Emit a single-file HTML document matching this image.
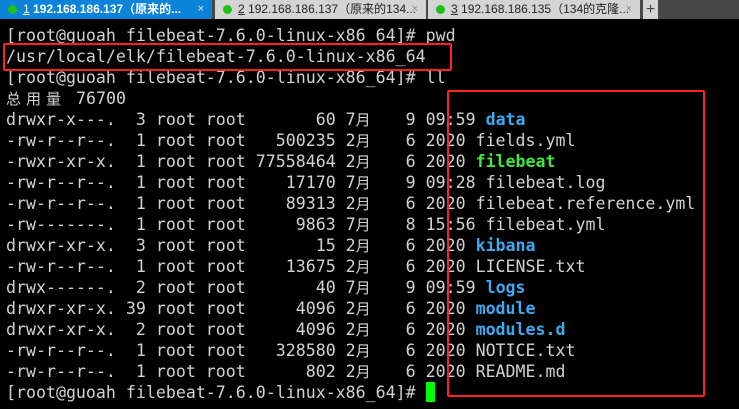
<!DOCTYPE html>
<html><head><meta charset="utf-8"><style>
*{margin:0;padding:0;box-sizing:border-box}
body{width:739px;height:409px;background:#000;overflow:hidden;position:relative;font-family:"DejaVu Sans Mono","Liberation Mono","Noto Sans CJK SC",monospace}
.bar{position:absolute;left:0;top:0;width:739px;height:19px;background:#474747}
.tab{position:absolute;top:0;height:19px;background:#d4d4d4;font-family:"Liberation Sans","Noto Sans CJK SC",sans-serif;font-size:12px;line-height:19px;color:#222;white-space:nowrap;overflow:hidden}
.tab .dot{position:absolute;left:8px;top:5px;width:9px;height:9px;border-radius:50%;background:#1cc21c}
.tab .t{position:absolute;left:23px;top:0}
.tab .x{position:absolute;right:8px;top:0;font-size:11px;color:#888}
.a{background:#0a83d8;color:#fff}
.a .x{color:#dfefff}
.term{position:absolute;left:6px;top:25px;font-size:16.6px;line-height:21px;color:#d2d2d2;white-space:pre}
.c{display:inline-block;width:20px;height:21px;line-height:21px;vertical-align:top;font-family:"Noto Sans CJK SC",sans-serif;font-size:15px}
.b{color:#3daaf0;font-weight:bold}
.g{color:#3ee63e;font-weight:bold}
.cur{display:inline-block;width:9px;height:20px;background:#00ff00;vertical-align:top}
.box{position:absolute;border:2.5px solid #f22;border-radius:2px}
</style></head><body>
<div class="bar"></div>
<div class="tab a" style="left:0;width:212px"><span class="dot"></span><span class="t"><u>1</u> <b>192.168.186.137（原来的...</b></span><span class="x">×</span></div>
<div class="tab" style="left:215px;width:211px"><span class="dot"></span><span class="t"><u>2</u> 192.168.186.137（原来的134...</span><span class="x">×</span></div>
<div class="tab" style="left:428px;width:212px"><span class="dot"></span><span class="t"><u>3</u> 192.168.186.135（134的克隆...</span><span class="x">×</span></div>
<div class="tab" style="left:643px;width:15px;font-size:16px;text-align:center;color:#444">+</div>
<div class="term">[root@guoah filebeat-7.6.0-linux-x86_64]# pwd
/usr/local/elk/filebeat-7.6.0-linux-x86_64
[root@guoah filebeat-7.6.0-linux-x86_64]# ll
<span class="c">总</span><span class="c">用</span><span class="c">量</span> 76700
drwxr-x---.  3 root root       60 7<span class="c">月</span>   9 09:59 <span class="b">data</span>
-rw-r--r--.  1 root root   500235 2<span class="c">月</span>   6 2020 fields.yml
-rwxr-xr-x.  1 root root 77558464 2<span class="c">月</span>   6 2020 <span class="g">filebeat</span>
-rw-r--r--.  1 root root    17170 7<span class="c">月</span>   9 09:28 filebeat.log
-rw-r--r--.  1 root root    89313 2<span class="c">月</span>   6 2020 filebeat.reference.yml
-rw-------.  1 root root     9863 7<span class="c">月</span>   8 15:56 filebeat.yml
drwxr-xr-x.  3 root root       15 2<span class="c">月</span>   6 2020 <span class="b">kibana</span>
-rw-r--r--.  1 root root    13675 2<span class="c">月</span>   6 2020 LICENSE.txt
drwx------.  2 root root       40 7<span class="c">月</span>   9 09:59 <span class="b">logs</span>
drwxr-xr-x. 39 root root     4096 2<span class="c">月</span>   6 2020 <span class="b">module</span>
drwxr-xr-x.  2 root root     4096 2<span class="c">月</span>   6 2020 <span class="b">modules.d</span>
-rw-r--r--.  1 root root   328580 2<span class="c">月</span>   6 2020 NOTICE.txt
-rw-r--r--.  1 root root      802 2<span class="c">月</span>   6 2020 README.md
[root@guoah filebeat-7.6.0-linux-x86_64]# <span class="cur"></span></div>
<div class="box" style="left:3px;top:43px;width:449px;height:28px"></div>
<div class="box" style="left:447px;top:90px;width:258px;height:307px"></div>
</body></html>
